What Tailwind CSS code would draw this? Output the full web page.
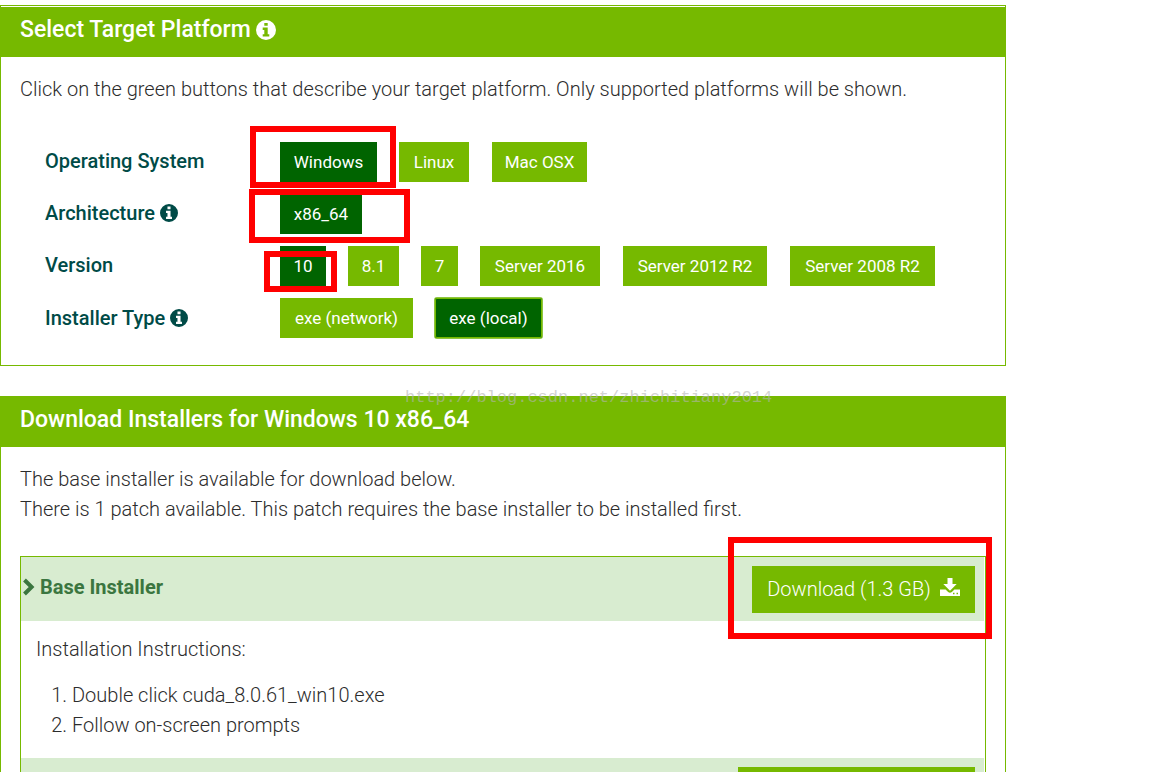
<!DOCTYPE html>
<html lang="en">
<head>
<meta charset="utf-8">
<meta name="viewport" content="width=device-width, initial-scale=1">
<title>Select Target Platform</title>
<script src="https://cdn.jsdelivr.net/npm/@tailwindcss/browser@4"></script>
</head>
<body class="bg-white">
<svg class="hidden" aria-hidden="true">
  <symbol id="info" viewBox="0 0 20 20"><path fill="currentColor" fill-rule="evenodd" d="M10 0a10 10 0 1 0 0 20a10 10 0 1 0 0-20zM8.3 2.9h3.4v2.9H8.3zM6.7 7.5h5v6.7h1.6v2.4H6.7v-2.4h1.6V9.9H6.7z"/></symbol>
</svg>
<div class="relative h-screen overflow-hidden pt-[5px] font-['Roboto','Open_Sans',sans-serif] text-xl leading-[30px] font-light text-[#2c2c2c]">
  <main class="mr-[146px] flex flex-col gap-[30px]">
    <section class="border border-[#76b900] pt-px">
      <h2 class="flex h-[50px] items-center gap-[5px] bg-[#76b900] pb-1 pl-[19px] text-[23px] font-medium text-white">Select Target Platform <svg class="size-5"><use href="#info"/></svg></h2>
      <p class="pt-[17px] pl-[19px] whitespace-nowrap">Click on the green buttons that describe your target platform. Only supported platforms will be shown.</p>
      <div class="flex flex-col gap-3 pt-[38px] pb-[27px] pl-11">
        <div class="flex h-10 items-center" role="group" aria-labelledby="os">
          <h3 id="os" class="w-[235px] pb-[2px] font-medium text-[#004b47]">Operating System</h3>
          <div class="flex text-[17px] font-normal text-white">
            <button class="mr-[22px] h-10 w-[97px] bg-[#006400] pb-px">Windows</button>
            <button class="mr-[23px] h-10 w-[70px] bg-[#76b900] pb-px">Linux</button>
            <button class="h-10 w-[95px] bg-[#76b900] pb-px">Mac OSX</button>
          </div>
        </div>
        <div class="flex h-10 items-center" role="group" aria-labelledby="arch">
          <h3 id="arch" class="flex w-[235px] items-center gap-[5px] pb-[2px] font-medium text-[#004b47]">Architecture <svg class="size-[18px]"><use href="#info"/></svg></h3>
          <div class="flex text-[17px] font-normal text-white">
            <button class="h-10 w-[82px] bg-[#006400] pb-px">x86_64</button>
          </div>
        </div>
        <div class="flex h-10 items-center" role="group" aria-labelledby="version">
          <h3 id="version" class="w-[235px] pb-[2px] font-medium text-[#004b47]">Version</h3>
          <div class="flex text-[17px] font-normal whitespace-nowrap text-white">
            <button class="mr-[22px] h-10 w-[46px] bg-[#006400] pb-px">10</button>
            <button class="mr-[22px] h-10 w-[51px] bg-[#76b900] pb-px">8.1</button>
            <button class="mr-[22px] h-10 w-[37px] bg-[#76b900] pb-px">7</button>
            <button class="mr-[23px] h-10 w-[120px] bg-[#76b900] pb-px">Server 2016</button>
            <button class="mr-[23px] h-10 w-[144px] bg-[#76b900] pb-px">Server 2012 R2</button>
            <button class="h-10 w-[145px] bg-[#76b900] pb-px">Server 2008 R2</button>
          </div>
        </div>
        <div class="flex h-10 items-center" role="group" aria-labelledby="type">
          <h3 id="type" class="flex w-[235px] items-center gap-[5px] font-medium text-[#004b47]">Installer Type <svg class="size-[18px]"><use href="#info"/></svg></h3>
          <div class="flex gap-[22px] text-[17px] font-normal text-white">
            <button class="h-10 w-[133px] bg-[#76b900] pb-px">exe (network)</button>
            <button class="h-10 w-[107px] rounded-xs bg-[#006400] pb-px ring-1 ring-[#8cc63f] inset-ring inset-ring-[#76b900]">exe (local)</button>
          </div>
        </div>
      </div>
    </section>

    <section class="border border-[#76b900]">
      <h2 class="flex h-[50px] items-center bg-[#76b900] pb-1 pl-[19px] text-[23px] font-medium text-white">Download Installers for Windows 10 x86_64</h2>
      <p class="px-[19px] pt-[17px]">The base installer is available for download below.<br>There is 1 patch available. This patch requires the base installer to be installed first.</p>
      <div class="mx-[19px] mt-8 border border-[#76b900] pr-px">
        <div class="flex h-16 items-center justify-between bg-[#d8ecd0] pr-[9px] pl-[2px]">
          <h3 class="flex items-center gap-[5px] pb-1 font-bold text-[#3b7640]"><svg class="h-[18px] w-3" viewBox="0 0 12 18" fill="none" stroke="currentColor" stroke-width="4"><path d="M1.5 2L8.6 9L1.5 16"/></svg>Base Installer</h3>
          <button class="flex h-[47px] w-[223px] items-center justify-center gap-[9px] bg-[#76b900] font-light whitespace-nowrap text-white">Download (1.3 GB)
            <svg class="mb-1 h-[18px] w-5" viewBox="0 0 20 18"><path fill="currentColor" fill-rule="evenodd" d="M7.5 0h5v6h4.2L10 12.7L3.300 6h4.200zM0 11.500h5.600l2.500 2.500q1.900 1.400 3.800 0l2.500-2.500H20V18H0zM13 14.800v1.500h1.500v-1.500zM16.500 14.800v1.500H18v-1.500z"/></svg>
          </button>
        </div>
        <p class="pt-[13px] pl-[15px]">Installation Instructions:</p>
        <ol class="list-decimal pt-4 pb-[18px] pl-[51px]">
          <li>Double click cuda_8.0.61_win10.exe</li>
          <li>Follow on-screen prompts</li>
        </ol>
        <div class="flex h-16 items-center justify-end bg-[#d8ecd0] pr-[9px]">
          <button class="h-[47px] w-[237px] bg-[#76b900]" aria-label="Download patch"></button>
        </div>
      </div>
    </section>
  </main>

  <!-- Red marker outlines -->
  <div class="pointer-events-none absolute top-[126px] left-[250px] h-[62px] w-[146px] border-6 border-[#ff0000]"></div>
  <div class="pointer-events-none absolute top-[189px] left-[249px] h-[54px] w-[161px] border-6 border-[#ff0000]"></div>
  <div class="pointer-events-none absolute top-[251px] left-[264px] h-[41px] w-[73px] border-6 border-[#ff0000]"></div>
  <div class="pointer-events-none absolute top-[537px] left-[728px] h-[102px] w-[264px] border-6 border-[#ff0000]"></div>
  <!-- Watermark -->
  <div class="pointer-events-none absolute top-[383px] left-[405px] font-['Liberation_Mono',monospace] text-[17px] font-normal text-[#b4b4b4]/60">http://blog.csdn.net/zhichitiany2014</div>
</div>
</body>
</html>
